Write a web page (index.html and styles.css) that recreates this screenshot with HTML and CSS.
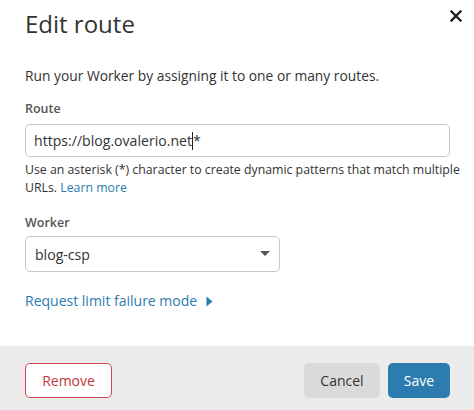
FILE: index.html
```html
<!DOCTYPE html>
<html>
<head>
<meta charset="utf-8">
<link rel="stylesheet" href="styles.css">
</head>
<body>
<div class="modal">
  <div class="content">
    <div class="header">
      <h1 class="title">Edit route</h1>
      <button class="close" aria-label="Close">
        <svg width="12" height="12" viewBox="0 0 12 12"><path d="M1.5 1.5L10.5 10.5M10.5 1.5L1.5 10.5" stroke="#222" stroke-width="2.4" stroke-linecap="square"/></svg>
      </button>
    </div>
    <p class="desc">Run your Worker by assigning it to one or many routes.</p>
    <label class="label">Route</label>
    <div class="input">https://blog.ovalerio.net<span class="caret"></span>*</div>
    <p class="help"><span>Use an asterisk (*) character to create dynamic patterns that match multiple</span><br><span>URLs.</span> <a class="link">Learn more</a></p>
    <label class="label worker-label">Worker</label>
    <div class="select">
      <span>blog-csp</span>
      <svg width="10" height="6" viewBox="0 0 10 6"><path d="M0 0H10L5 5Z" fill="#555"/></svg>
    </div>
    <div class="toggle">
      <span>Request limit failure mode</span>
      <svg width="7" height="11" viewBox="0 0 7 11"><path d="M0.5 0.5L6.5 5.5L0.5 10.5Z" fill="#2c7cb0"/></svg>
    </div>
  </div>
  <div class="footer">
    <button class="btn remove">Remove</button>
    <div class="right">
      <button class="btn cancel">Cancel</button>
      <button class="btn save">Save</button>
    </div>
  </div>
</div>
</body>
</html>
```
FILE: styles.css
```css
* { box-sizing: border-box; }
html, body { margin: 0; padding: 0; background: #fff; }
body {
  font-family: "Open Sans", "Noto Sans", sans-serif;
  color: #333;
  width: 474px;
  height: 410px;
  overflow: hidden;
}
.modal { display: flex; flex-direction: column; height: 410px; }
.content { padding: 0 24px 0 25px; flex: 1; }
.header { display: flex; justify-content: space-between; align-items: flex-start; }
.title {
  margin: 8px 0 0;
  font-size: 24px;
  font-weight: 400;
  line-height: 32px;
  color: #333;
}
.close {
  border: 0; background: none; padding: 0;
  margin: 9px -13px 0 0;
  width: 14px; height: 14px;
  display: flex; align-items: center; justify-content: center;
}
.desc {
  margin: 26px 0 0;
  font-size: 13.8px;
  line-height: 20px;
  color: #333;
}
.label {
  display: block;
  margin-top: 14px;
  font-size: 12.5px;
  font-weight: 600;
  color: #555;
  line-height: 18px;
}
.input {
  margin-top: 6px;
  height: 33px;
  width: 425px;
  border: 1px solid #c8c8c8;
  border-radius: 5px;
  padding: 0 8px;
  display: flex;
  align-items: center;
  font-size: 14.1px;
  color: #333;
}
.caret {
  display: inline-block;
  width: 1px;
  height: 18px;
  background: #222;
}
.help {
  margin: 4px -12px 0 0;
  font-size: 12.3px;
  line-height: 18px;
  color: #333;
}
.link { color: #2c7cb0; }
.worker-label { margin-top: 17px; }
.select {
  margin-top: 4px;
  width: 255px;
  height: 36px;
  border: 1px solid #c8c8c8;
  border-radius: 5px;
  padding: 0 9px;
  display: flex;
  align-items: center;
  justify-content: space-between;
  font-size: 14.1px;
  color: #333;
}
.toggle {
  margin-top: 19px;
  display: flex;
  align-items: center;
  gap: 9px;
  font-size: 14px;
  line-height: 20px;
  color: #2c7cb0;
}
.footer {
  height: 64px;
  background: #ebebeb;
  padding: 17px 24px 0 25px;
  display: flex;
  justify-content: space-between;
  align-items: flex-start;
}
.right { display: flex; gap: 8px; }
.btn {
  font-family: "Open Sans", "Noto Sans", sans-serif;
  font-size: 14px;
  height: 35px;
  border-radius: 5px;
  padding: 0;
  cursor: pointer;
}
.remove {
  width: 87px;
  background: #fff;
  border: 1px solid #d1454f;
  color: #c33540;
}
.cancel {
  width: 76px;
  background: #dadada;
  border: 0;
  color: #333;
}
.save {
  width: 62px;
  background: #2c7cb0;
  border: 0;
  color: #fff;
}
```
